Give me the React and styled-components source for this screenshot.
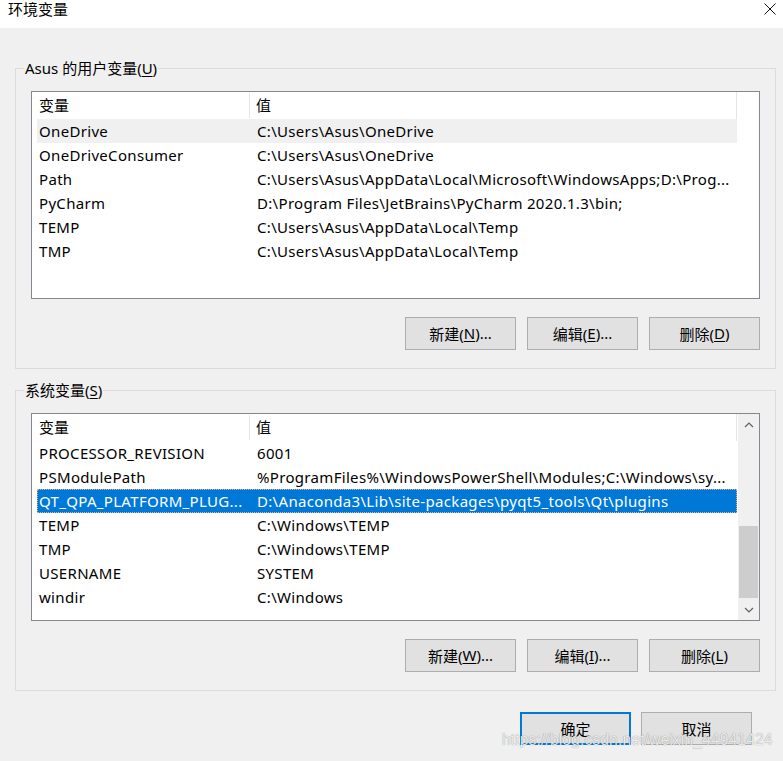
import React from "react";
import styled, { createGlobalStyle } from "styled-components";

const Global = createGlobalStyle`
  html, body {
    margin: 0;
    padding: 0;
    background: #f0f0f0;
  }
  * { box-sizing: border-box; }
`;

const FONT = `"Noto Sans", "Noto Sans CJK SC", sans-serif`;

const userVars = [
  ["OneDrive", "C:\\Users\\Asus\\OneDrive"],
  ["OneDriveConsumer", "C:\\Users\\Asus\\OneDrive"],
  ["Path", "C:\\Users\\Asus\\AppData\\Local\\Microsoft\\WindowsApps;D:\\Prog..."],
  ["PyCharm", "D:\\Program Files\\JetBrains\\PyCharm 2020.1.3\\bin;"],
  ["TEMP", "C:\\Users\\Asus\\AppData\\Local\\Temp"],
  ["TMP", "C:\\Users\\Asus\\AppData\\Local\\Temp"],
];

const sysVars = [
  ["PROCESSOR_REVISION", "6001"],
  ["PSModulePath", "%ProgramFiles%\\WindowsPowerShell\\Modules;C:\\Windows\\sy..."],
  ["QT_QPA_PLATFORM_PLUG...", "D:\\Anaconda3\\Lib\\site-packages\\pyqt5_tools\\Qt\\plugins"],
  ["TEMP", "C:\\Windows\\TEMP"],
  ["TMP", "C:\\Windows\\TEMP"],
  ["USERNAME", "SYSTEM"],
  ["windir", "C:\\Windows"],
];

function Chevron({ down }) {
  return (
    <svg width="10" height="6" viewBox="0 0 10 6">
      <polyline
        points={down ? "1,1 5,5 9,1" : "1,5 5,1 9,5"}
        fill="none"
        stroke="#606060"
        strokeWidth="1.2"
      />
    </svg>
  );
}

function VarList({ rows, selected, hover, scroll }) {
  return (
    <ListBox>
      <Table>
        <HeaderRow>
          <HeadCell first>变量</HeadCell>
          <HeadCell>值</HeadCell>
        </HeaderRow>
        {rows.map(([name, value], i) => (
          <Row key={name + i} $selected={i === selected} $hover={i === hover}>
            <Cell first>{name}</Cell>
            <Cell>{value}</Cell>
          </Row>
        ))}
      </Table>
      {scroll ? (
        <ScrollBar>
          <ArrowBtn><Chevron /></ArrowBtn>
          <Track><Thumb /></Track>
          <ArrowBtn><Chevron down /></ArrowBtn>
        </ScrollBar>
      ) : (
        <Spacer />
      )}
    </ListBox>
  );
}

export default function App() {
  return (
    <>
      <Global />
      <Window>
        <TitleBar>
          <Title>环境变量</Title>
          <CloseBtn>
            <svg width="12" height="12" viewBox="0 0 12 12">
              <path d="M0.5 0.5 L11.5 11.5 M11.5 0.5 L0.5 11.5" stroke="#111" strokeWidth="1" />
            </svg>
          </CloseBtn>
        </TitleBar>

        <Body>
          <Group>
            <Caption>Asus 的用户变量(<Key>U</Key>)</Caption>
            <VarList rows={userVars} hover={0} />
            <ButtonRow>
              <Button>新建(<Key>N</Key>)...</Button>
              <Button>编辑(<Key>E</Key>)...</Button>
              <Button>删除(<Key>D</Key>)</Button>
            </ButtonRow>
          </Group>

          <Group $gap>
            <Caption>系统变量(<Key>S</Key>)</Caption>
            <VarList rows={sysVars} selected={2} scroll />
            <ButtonRow>
              <Button>新建(<Key>W</Key>)...</Button>
              <Button>编辑(<Key>I</Key>)...</Button>
              <Button>删除(<Key>L</Key>)</Button>
            </ButtonRow>
          </Group>
        </Body>

        <Footer>
          <Button $default $w={111}>确定</Button>
          <Button $w={111}>取消</Button>
        </Footer>

        <Watermark>https://blog.csdn.net/weixin_44941424</Watermark>
      </Window>
    </>
  );
}

const Window = styled.div`
  position: relative;
  width: 783px;
  height: 761px;
  background: #f0f0f0;
  font-family: ${FONT};
  font-size: 15px;
  color: #000;
  overflow: hidden;
`;

const TitleBar = styled.div`
  height: 28px;
  background: #fff;
  display: flex;
  align-items: flex-start;
  justify-content: space-between;
  padding: 0 7px 0 8px;
`;

const Title = styled.div`
  line-height: 19px;
  font-size: 15px;
`;

const CloseBtn = styled.div`
  width: 12px;
  height: 12px;
  margin-top: 3px;
  display: flex;
`;

const Body = styled.div`
  padding: 40px 7px 0 15px;
`;

const Group = styled.div`
  position: relative;
  width: 761px;
  border: 1px solid #dcdcdc;
  padding: 22px 15px 18px 15px;
  margin-top: ${(p) => (p.$gap ? "21px" : "0")};
`;

const Caption = styled.div`
  position: absolute;
  top: -11px;
  left: 8px;
  padding: 0 1px;
  background: #f0f0f0;
  line-height: 20px;
  white-space: nowrap;
`;

const Key = styled.span`
  text-decoration: underline;
  text-underline-offset: 2px;
`;

const ListBox = styled.div`
  height: 208px;
  border: 1px solid #828790;
  background: #fff;
  display: flex;
`;

const Table = styled.div`
  flex: 1;
  min-width: 0;
  padding-left: 5px;
`;

const HeaderRow = styled.div`
  display: grid;
  grid-template-columns: 213px 1fr;
  height: 27px;
  align-items: stretch;
  border-right: 1px solid #e5e5e5;
`;

const HeadCell = styled.div`
  padding-left: ${(p) => (p.first ? "2px" : "6px")};
  border-right: ${(p) => (p.first ? "1px solid #e5e5e5" : "none")};
  margin: ${(p) => (p.first ? "1px 0 1px 0" : "0")};
  line-height: ${(p) => (p.first ? "25px" : "27px")};
`;

const Row = styled.div`
  display: grid;
  grid-template-columns: 213px 1fr;
  height: 24px;
  line-height: 22px;
  letter-spacing: 0.32px;
  background: ${(p) => (p.$selected ? "#0078d7" : p.$hover ? "#f0f0f0" : "transparent")};
  color: ${(p) => (p.$selected ? "#fff" : "#000")};
  border: 1px ${(p) => (p.$selected ? "dotted #e8b070" : "solid transparent")};
`;

const Cell = styled.div`
  padding-left: ${(p) => (p.first ? "1px" : "6px")};
  white-space: nowrap;
  overflow: hidden;
  text-overflow: ellipsis;
`;

const Spacer = styled.div`
  width: 22px;
`;

const ScrollBar = styled.div`
  width: 22px;
  display: flex;
  flex-direction: column;
  background: #f0f0f0;
  border-left: 1px solid #fff;
`;

const ArrowBtn = styled.div`
  height: 21px;
  display: flex;
  align-items: center;
  justify-content: center;
`;

const Track = styled.div`
  flex: 1;
  display: flex;
  flex-direction: column;
  justify-content: flex-end;
  padding: 0 1px 1px 1px;
`;

const Thumb = styled.div`
  height: 72px;
  background: #cdcdcd;
`;

const ButtonRow = styled.div`
  display: flex;
  justify-content: flex-end;
  gap: 11px;
  margin-top: 18px;
`;

const Button = styled.div`
  width: ${(p) => p.$w || 111}px;
  height: 33px;
  display: flex;
  align-items: center;
  justify-content: center;
  background: #e1e1e1;
  border: ${(p) => (p.$default ? "2px solid #0078d7" : "1px solid #adadad")};
  white-space: nowrap;
  padding-bottom: 1px;
`;

const Footer = styled.div`
  display: flex;
  justify-content: flex-end;
  gap: 10px;
  padding: 21px 31px 0 0;
`;

const Watermark = styled.div`
  position: absolute;
  left: 502px;
  top: 731px;
  font-family: "Liberation Sans", sans-serif;
  font-size: 15.7px;
  letter-spacing: 0.1px;
  color: rgba(255, 255, 255, 0.85);
  text-shadow: 0 0 1px rgba(0, 0, 0, 0.5);
  white-space: nowrap;
  pointer-events: none;
`;
